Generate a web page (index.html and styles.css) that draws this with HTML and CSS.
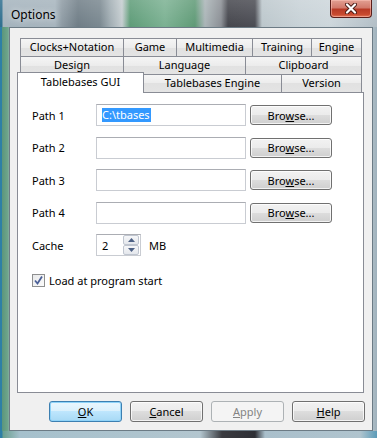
FILE: index.html
```html
<!DOCTYPE html>
<html lang="en">
<head>
  <meta charset="UTF-8" />
  <title>Options</title>
  <link rel="stylesheet" href="styles.css">
</head>
<body>

  <!-- Title Bar -->
  <div class="titlebar">
    <span class="title">Options</span>
    <div class="close">
      <svg width="12" height="11" viewBox="0 0 12 11">
        <path d="M2 1.5 L10 9.5 M10 1.5 L2 9.5" stroke="#4a1a14" stroke-width="4" stroke-linecap="round" />
        <path d="M2 1.5 L10 9.5 M10 1.5 L2 9.5" stroke="#ffffff" stroke-width="2.2" stroke-linecap="round" />
      </svg>
    </div>
  </div>

  <!-- Dialog Client Area -->
  <div class="client">

    <!-- Tabs -->
    <div class="tabs">
      <div class="tab-row indent">
        <div class="tab first" style="width:104px">Clocks+Notation</div>
        <div class="tab" style="width:53px">Game</div>
        <div class="tab" style="width:76px">Multimedia</div>
        <div class="tab" style="width:59px">Training</div>
        <div class="tab" style="width:50px">Engine</div>
      </div>
      <div class="tab-row indent">
        <div class="tab first" style="width:104px">Design</div>
        <div class="tab" style="width:122px">Language</div>
        <div class="tab" style="width:116px">Clipboard</div>
      </div>
      <div class="tab-row">
        <div class="tab first selected" style="width:127px">Tablebases GUI</div>
        <div class="tab" style="width:138px">Tablebases Engine</div>
        <div class="tab" style="width:80px">Version</div>
      </div>
    </div>

    <!-- Tab Page -->
    <div class="panel">
      <div class="fields">
        <div class="field-row">
          <span class="label">Path 1</span>
          <div class="textbox"><span class="selection">C:\tbases</span></div>
          <button class="btn browse">Bro<u>w</u>se...</button>
        </div>
        <div class="field-row">
          <span class="label">Path 2</span>
          <div class="textbox"></div>
          <button class="btn browse">Bro<u>w</u>se...</button>
        </div>
        <div class="field-row">
          <span class="label">Path 3</span>
          <div class="textbox"></div>
          <button class="btn browse">Bro<u>w</u>se...</button>
        </div>
        <div class="field-row">
          <span class="label">Path 4</span>
          <div class="textbox"></div>
          <button class="btn browse">Bro<u>w</u>se...</button>
        </div>
        <div class="field-row">
          <span class="label">Cache</span>
          <div class="spin">
            <span class="spin-value">2</span>
            <div class="spin-buttons">
              <div class="spin-btn">
                <svg width="7" height="4" viewBox="0 0 7 4"><path d="M0 4 L3.5 0 L7 4 Z" fill="#4d6185" /></svg>
              </div>
              <div class="spin-btn">
                <svg width="7" height="4" viewBox="0 0 7 4"><path d="M0 0 L3.5 4 L7 0 Z" fill="#4d6185" /></svg>
              </div>
            </div>
          </div>
          <span class="unit">MB</span>
        </div>
      </div>

      <div class="check-row">
        <div class="checkbox">
          <svg width="11" height="11" viewBox="0 0 11 11">
            <path d="M2 5.5 L4.5 8.5 L9 1.5" fill="none" stroke="#4a5f97" stroke-width="1.8" />
          </svg>
        </div>
        <span>Load at program start</span>
      </div>
    </div>

    <!-- Dialog Buttons -->
    <div class="buttons">
      <button class="btn default"><u>O</u>K</button>
      <button class="btn"><u>C</u>ancel</button>
      <button class="btn disabled"><u>A</u>pply</button>
      <button class="btn"><u>H</u>elp</button>
    </div>
  </div>

  <div class="frame-bottom"></div>

</body>
</html>
```

FILE: styles.css
```css
* {
  box-sizing: border-box;
}

body {
  margin: 0;
  width: 377px;
  height: 438px;
  overflow: hidden;
  font-family: 'Noto Sans', 'Open Sans', sans-serif;
  font-size: 11px;
  color: #000;
  background: linear-gradient(to right, #2d7fa6 0, #2d7fa6 2px, #5b957b 2px, #6fa68c 8px, #a8b8c0 10px, #b5c3ca 370px, #9fb1bc 377px);
}

/* Aero Title Bar */
.titlebar {
  height: 27px;
  display: flex;
  align-items: flex-start;
  background:
    linear-gradient(to bottom, rgba(255, 255, 255, 0.15), rgba(255, 255, 255, 0)),
    linear-gradient(to right, #2f6f8f 0, #2f6f8f 2px, #a4b3bd 3px, #a6b4bd 55px, #8d9aa3 62px, #6f7d86 78px, #7a8890 100px, #a0acb2 110px, #c5cdd0 122px, #5e9c78 130px, #7bb192 165px, #5f9a76 195px, #aab4b7 205px, #8a8e94 221px, #45464d 228px, #4b4c53 255px, #bcc7cc 262px, #c8d2d7 300px, #cdd6db 330px, #b2bec6 377px);
}

.title {
  padding: 6px 0 0 11px;
  font-size: 12px;
  text-shadow: 0 0 6px rgba(255, 255, 255, 0.9);
}

.close {
  margin-left: auto;
  margin-right: 5px;
  width: 42px;
  height: 18px;
  border: 1px solid #5a1e1a;
  border-top: none;
  border-radius: 0 0 4px 4px;
  background: linear-gradient(to bottom, #e2a093 0, #d27a6c 45%, #b83a26 55%, #c84a30 85%, #e4785a 100%);
  box-shadow: inset 0 0 0 1px rgba(255, 200, 190, 0.5);
  display: flex;
  align-items: center;
  justify-content: center;
}

/* Client Area */
.client {
  margin: 0 4px 0 9px;
  height: 404px;
  border: 1px solid #6c7b85;
  background-color: #f0f0f0;
  padding: 10px 8px 0 7px;
}

.tabs {
  height: 54px;
}

.tab-row {
  display: flex;
  height: 18px;
}

.tab-row.indent {
  padding-left: 3px;
}

.tab {
  height: 18px;
  border-top: 1px solid #898c95;
  border-right: 1px solid #898c95;
  background: linear-gradient(to bottom, #f5f5f5 0, #ececec 50%, #e1e1e1 50%, #e4e4e4 100%);
  text-align: center;
  line-height: 16px;
  flex: none;
}

.tab.first {
  border-left: 1px solid #898c95;
}

.tab.selected {
  position: relative;
  z-index: 1;
  height: 21px;
  margin-top: -2px;
  background: #fff;
  line-height: 18px;
}

.panel {
  height: 301px;
  border: 1px solid #898c95;
  background-color: #fff;
  padding: 11px 0 0 14px;
}

.fields {
  display: flex;
  flex-direction: column;
  gap: 10.5px;
}

.field-row {
  display: flex;
  align-items: center;
  height: 22px;
}

.label {
  width: 64px;
}

.textbox {
  width: 150px;
  height: 22px;
  border: 1px solid #c9ccd2;
  border-top-color: #abadb3;
  margin-right: 4px;
  padding: 2px 0 0 5px;
}

.selection {
  display: inline-block;
  background-color: #3399ff;
  color: #fff;
  line-height: 13px;
  padding: 0 1px 1px 0;
}

.btn {
  width: 73px;
  height: 21px;
  padding: 0;
  font-family: inherit;
  font-size: 11px;
  color: #000;
  border: 1px solid #707070;
  border-radius: 3px;
  background: linear-gradient(to bottom, #f2f2f2 0, #ebebeb 50%, #dddddd 50%, #cfcfcf 100%);
  box-shadow: inset 0 0 0 1px rgba(255, 255, 255, 0.75);
}

.btn.browse {
  width: 82px;
  height: 20px;
}

.btn.default {
  border-color: #3c7fb1;
  background: linear-gradient(to bottom, #eaf6fd 0, #d9f0fc 50%, #bee6fd 50%, #a7d9f5 100%);
  box-shadow: inset 0 0 0 1px #8fd3f8;
}

.btn.disabled {
  border-color: #adb2b5;
  background: #f4f4f4;
  color: #838383;
  box-shadow: none;
}

/* Cache Spin Box */
.spin {
  width: 45px;
  height: 22px;
  border: 1px solid #c9ccd2;
  border-top-color: #abadb3;
  display: flex;
  align-items: center;
}

.spin-value {
  padding-left: 5px;
}

.spin-buttons {
  margin-left: auto;
  margin-right: 1px;
  display: flex;
  flex-direction: column;
}

.spin-btn {
  width: 16px;
  height: 10px;
  border: 1px solid #c0c6d0;
  border-radius: 2px;
  background: linear-gradient(to bottom, #f6f7f9, #e4e7ec);
  display: flex;
  align-items: center;
  justify-content: center;
}

.unit {
  margin-left: 8px;
}

.check-row {
  display: flex;
  align-items: center;
  gap: 4px;
  margin-top: 18px;
  height: 13px;
}

.checkbox {
  width: 13px;
  height: 13px;
  border: 1px solid #8e8f8f;
  background: linear-gradient(to bottom right, #e8e9ea, #fbfbfb);
  display: flex;
  align-items: center;
  justify-content: center;
}

.buttons {
  display: flex;
  justify-content: flex-end;
  gap: 8px;
  margin: 8px -1px 0 0;
}

.frame-bottom {
  height: 7px;
  background: linear-gradient(to right, #2d7fa6 0, #2d7fa6 2px, #69a08f 3px, #a5c0cc 20px, #b3c6cf 200px, #3a3b40 222px, #2e2f35 255px, #a9bfcb 265px, #b0c4ce 360px, #5b9bb8 377px);
}
```
